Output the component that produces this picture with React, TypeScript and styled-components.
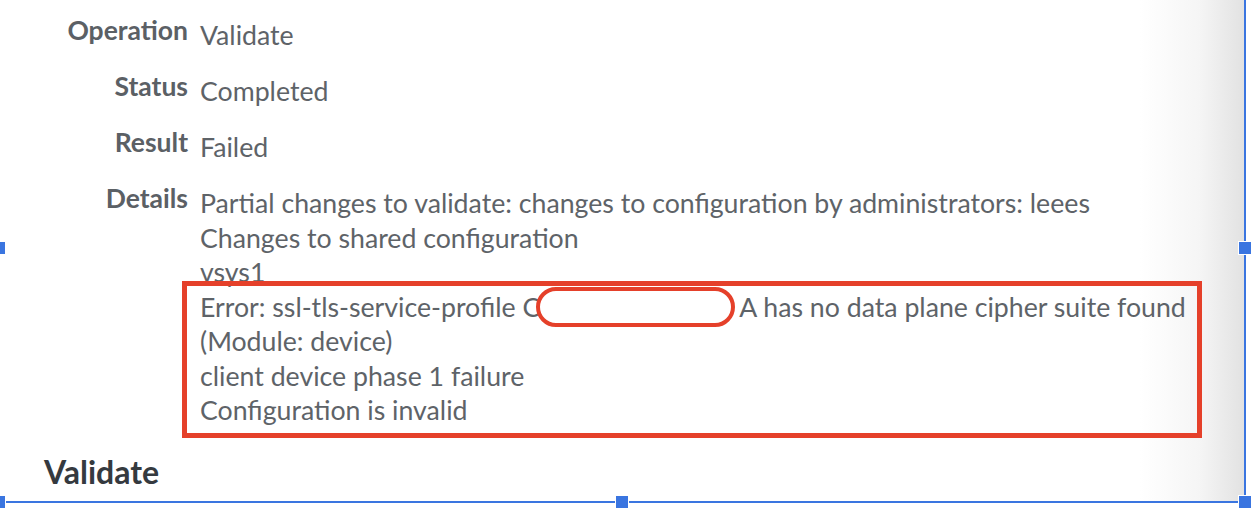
import React from 'react';
import styled, { createGlobalStyle } from 'styled-components';

const GlobalStyle = createGlobalStyle`
  html, body {
    margin: 0;
    padding: 0;
    background: #ffffff;
    overflow: hidden;
  }
  body {
    font-family: Lato, "Open Sans", "Liberation Sans", sans-serif;
  }
`;

const Stage = styled.div`
  position: relative;
  width: 1252px;
  height: 508px;
  overflow: hidden;
  background: #ffffff;
`;

const Sheet = styled.div`
  width: 1244px;
  height: 501px;
  padding-top: 18px;
  box-sizing: border-box;
  background: linear-gradient(90deg, #ffffff 1140px, #f5f5f5 1200px, #e2e2e2 1244px);
`;

const InfoGrid = styled.dl`
  margin: 0;
  display: grid;
  grid-template-columns: 188px 1fr;
  column-gap: 12px;
  row-gap: 21.5px;
  align-items: start;
`;

const Label = styled.dt`
  margin: -4.7px 0 0;
  text-align: right;
  font-size: 26.5px;
  font-weight: 700;
  line-height: 34.5px;
  color: #5b6065;
`;

const Value = styled.dd`
  margin: 0;
  font-size: 26.7px;
  line-height: 34.5px;
  color: #5e6368;
`;

const Line = styled.div`
  white-space: nowrap;
`;

const Highlight = styled.div`
  position: relative;

  &::after {
    content: '';
    position: absolute;
    top: -8.5px;
    bottom: -10.5px;
    left: -18px;
    width: 1020px;
    box-sizing: border-box;
    border: 5px solid #e5402a;
    pointer-events: none;
  }
`;

const Redacted = styled.span`
  display: inline-block;
  box-sizing: border-box;
  width: 199px;
  height: 40px;
  margin: -6px 4px -6px -4px;
  vertical-align: -4px;
  border: 4px solid #e5402a;
  border-radius: 20px;
  background: #ffffff;
`;

const SectionTitle = styled.h2`
  margin: 25px 0 0 44px;
  font-size: 32px;
  font-weight: 700;
  line-height: 1.2;
  color: #353a3f;
`;

const Frame = styled.div`
  position: absolute;
  left: -2px;
  top: -8px;
  width: 1248px;
  height: 511px;
  box-sizing: border-box;
  border: 2px solid #3a75e0;
  pointer-events: none;
`;

const Handle = styled.span<{ $x: string; $y: string }>`
  position: absolute;
  left: ${(p) => p.$x};
  top: ${(p) => p.$y};
  width: 12px;
  height: 12px;
  margin: -7px 0 0 -7px;
  background: #3a75e0;
  border: 1px solid #ffffff;
`;

const handles = [
  { x: '-1px', y: '50%' },
  { x: 'calc(100% + 1px)', y: '50%' },
  { x: '50%', y: 'calc(100% + 1px)' },
  { x: '-1px', y: 'calc(100% + 1px)' },
  { x: 'calc(100% + 1px)', y: 'calc(100% + 1px)' },
];

const App: React.FC = () => {
  return (
    <>
      <GlobalStyle />
      <Stage>
        <Sheet>
          <InfoGrid>
            <Label>Operation</Label>
            <Value>Validate</Value>

            <Label>Status</Label>
            <Value>Completed</Value>

            <Label>Result</Label>
            <Value>Failed</Value>

            <Label>Details</Label>
            <Value>
              <Line>Partial changes to validate: changes to configuration by administrators: leees</Line>
              <Line>Changes to shared configuration</Line>
              <Line>vsys1</Line>
              <Highlight>
                <Line>
                  Error: ssl-tls-service-profile C
                  <Redacted />
                  A has no data plane cipher suite found
                </Line>
                <Line>(Module: device)</Line>
                <Line>client device phase 1 failure</Line>
                <Line>Configuration is invalid</Line>
              </Highlight>
            </Value>
          </InfoGrid>
          <SectionTitle>Validate</SectionTitle>
        </Sheet>
        <Frame>
          {handles.map((h, index) => (
            <Handle key={`handle-${index}`} $x={h.x} $y={h.y} />
          ))}
        </Frame>
      </Stage>
    </>
  );
};

export default App;
